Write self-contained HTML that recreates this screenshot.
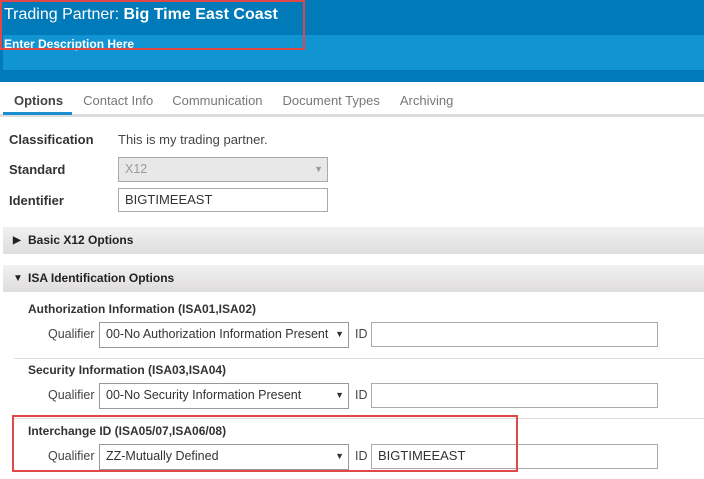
<!DOCTYPE html>
<html><head><style>
*{margin:0;padding:0;box-sizing:border-box}
body{width:704px;height:479px;overflow:hidden;background:#fff;font-family:"Liberation Sans",Arial,sans-serif;position:relative;color:#333}
.a{position:absolute}
.lbl{font-size:13px;font-weight:bold;color:#333}
.inp{position:absolute;border:1px solid #aaa;background:#fff;font-size:13px;color:#333;padding-left:6px;line-height:22px}
.sel{position:absolute;border:1px solid #999;background:#fff;font-size:12.5px;color:#333;padding-left:6px;line-height:23px;white-space:nowrap}
.sel:after{content:"▼";position:absolute;right:4px;top:0;font-size:9px}
.bar{position:absolute;left:3px;width:701px;height:27px;background:linear-gradient(#f2f1f1,#dedcdc);font-size:12px;font-weight:bold;line-height:27px;color:#222}
.bar i{position:absolute;left:10px;font-style:normal;font-size:10px}
.bar span{position:absolute;left:25px}
.q{font-size:12.5px;color:#444}
.sep{position:absolute;left:14px;width:690px;height:1px;background:#ddd}
</style></head><body>
<div class="a" style="left:0;top:0;width:704px;height:82px;background:#007ab8"></div>
<div class="a" style="left:3px;top:35px;width:701px;height:35px;background:#1094d2"></div>
<div class="a" style="left:4px;top:6px;font-size:16px;color:#fff">Trading Partner: <b>Big Time East Coast</b></div>
<div class="a" style="left:4px;top:37px;font-size:12px;font-weight:bold;color:#fff">Enter Description Here</div>
<div class="a" style="left:0;top:0;width:305px;height:50px;border:2px solid #e04848"></div>
<div class="a" style="left:0;top:114px;width:704px;height:3px;background:#ddd"></div>
<div class="a" style="left:3px;top:112px;width:69px;height:3px;background:#1a8fd0"></div>
<div class="a" style="left:14px;top:93px;font-size:13px;color:#555;white-space:nowrap"><b style="color:#444">Options</b><span style="margin-left:20px;color:#777">Contact Info</span><span style="margin-left:19px;color:#777">Communication</span><span style="margin-left:20px;color:#777">Document Types</span><span style="margin-left:20px;color:#777">Archiving</span></div>
<div class="a lbl" style="left:9px;top:132px">Classification</div>
<div class="a" style="left:118px;top:132px;font-size:13px;color:#444">This is my trading partner.</div>
<div class="a lbl" style="left:9px;top:162px">Standard</div>
<div class="sel" style="left:118px;top:157px;width:210px;height:25px;background:#e8e8e8;color:#999;border-color:#aaa">X12</div>
<div class="a lbl" style="left:9px;top:193px">Identifier</div>
<div class="inp" style="left:118px;top:188px;width:210px;height:24px">BIGTIMEEAST</div>
<div class="bar" style="top:227px"><i>▶</i><span>Basic X12 Options</span></div>
<div class="bar" style="top:265px"><i>▼</i><span>ISA Identification Options</span></div>
<div class="a" style="left:28px;top:302px;font-size:12px;font-weight:bold;color:#333">Authorization Information (ISA01,ISA02)</div>
<div class="a q" style="left:48px;top:327px">Qualifier</div>
<div class="sel" style="left:99px;top:322px;width:250px;height:26px">00-No Authorization Information Present</div>
<div class="a q" style="left:355px;top:327px">ID</div>
<div class="inp" style="left:371px;top:322px;width:287px;height:25px"></div>
<div class="sep" style="top:358px"></div>
<div class="a" style="left:28px;top:363px;font-size:12px;font-weight:bold;color:#333">Security Information (ISA03,ISA04)</div>
<div class="a q" style="left:48px;top:388px">Qualifier</div>
<div class="sel" style="left:99px;top:383px;width:250px;height:26px">00-No Security Information Present</div>
<div class="a q" style="left:355px;top:388px">ID</div>
<div class="inp" style="left:371px;top:383px;width:287px;height:25px"></div>
<div class="sep" style="top:418px"></div>
<div class="a" style="left:28px;top:424px;font-size:12px;font-weight:bold;color:#333">Interchange ID (ISA05/07,ISA06/08)</div>
<div class="a q" style="left:48px;top:449px">Qualifier</div>
<div class="sel" style="left:99px;top:444px;width:250px;height:26px">ZZ-Mutually Defined</div>
<div class="a q" style="left:355px;top:449px">ID</div>
<div class="inp" style="left:371px;top:444px;width:287px;height:25px">BIGTIMEEAST</div>
<div class="a" style="left:12px;top:415px;width:506px;height:57px;border:2px solid #e04848"></div>
</body></html>
